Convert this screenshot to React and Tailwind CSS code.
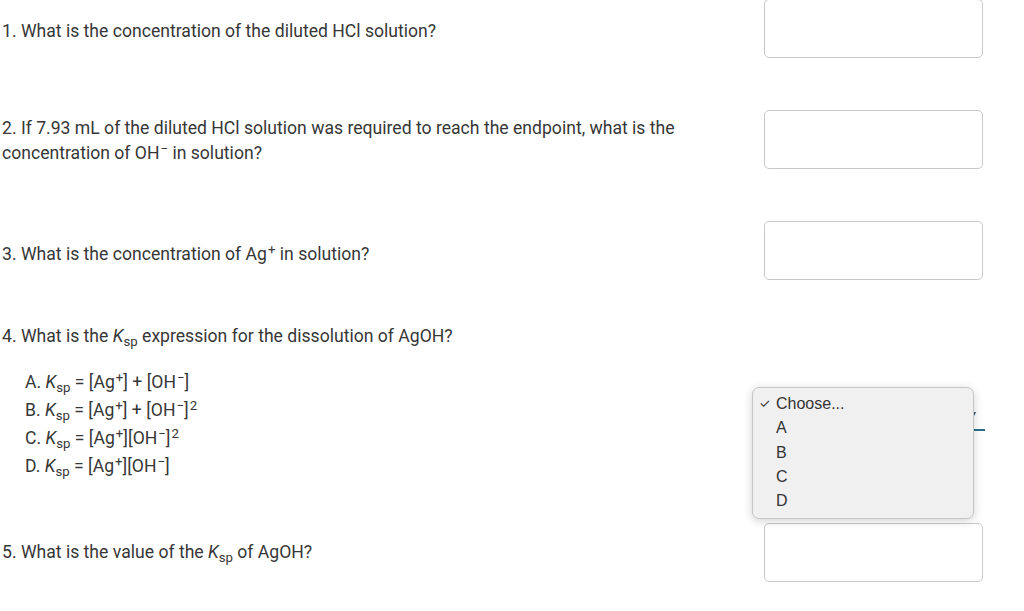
import React from 'react';

const Ksp = () => (
  <span>
    <i>K</i>
    <sub className="bottom-[-0.3em]">sp</sub>
  </span>
);

const Sup = ({ children }) => <sup className="top-[-0.45em] pl-[1px]">{children}</sup>;

const AnswerBox = () => (
  <div className="w-[219px] h-[59px] rounded-[5px] border border-[#c9c9c9] bg-white" />
);

export default function App() {
  return (
    <div className="w-[1024px] h-[611px] overflow-hidden bg-white font-['Roboto','Liberation_Sans',sans-serif] text-[17.6px] leading-[25px] text-[#373737]">
      <div className="w-[983px] pl-[2px] flex flex-col">
        {/* ── Q1 ── */}
        <div className="-mt-px flex items-center justify-between">
          <p className="w-[720px] pt-[5px]">1. What is the concentration of the diluted HCl solution?</p>
          <AnswerBox />
        </div>

        {/* ── Q2 ── */}
        <div className="mt-[52px] flex items-center justify-between">
          <p className="w-[720px] pt-[3px]">
            2. If 7.93 mL of the diluted HCl solution was required to reach the endpoint, what is the
            concentration of OH<Sup>−</Sup> in solution?
          </p>
          <AnswerBox />
        </div>

        {/* ── Q3 ── */}
        <div className="mt-[52px] flex items-center justify-between">
          <p className="w-[720px] pt-[7px]">
            3. What is the concentration of Ag<Sup>+</Sup> in solution?
          </p>
          <AnswerBox />
        </div>

        {/* ── Q4 ── */}
        <div className="mt-[44px] flex items-start justify-between">
          <div className="w-[720px]">
            <p>
              4. What is the <Ksp /> expression for the dissolution of AgOH?
            </p>
            <ul className="mt-[19px] pl-[23px] leading-[28px]">
              <li>A. <Ksp /> = [Ag<Sup>+</Sup>] + [OH<Sup>−</Sup>]</li>
              <li>B. <Ksp /> = [Ag<Sup>+</Sup>] + [OH<Sup>−</Sup>]<Sup>2</Sup></li>
              <li>C. <Ksp /> = [Ag<Sup>+</Sup>][OH<Sup>−</Sup>]<Sup>2</Sup></li>
              <li>D. <Ksp /> = [Ag<Sup>+</Sup>][OH<Sup>−</Sup>]</li>
            </ul>
          </div>
          <div className="relative w-[219px] mt-[74px]">
            <div className="relative w-[221px] h-[33px] bg-white border-b-2 border-[#2a6f8a]">
              <span className="absolute right-[9px] top-[12px] text-[8px] leading-none text-[#555]">▾</span>
            </div>
            {/* ── Open dropdown ── */}
            <div className="absolute left-[-12px] top-[-11px] w-[222px] h-[132px] rounded-[7px] border border-[#c6c6c6] bg-[#f0f0f0] shadow-[0_2px_10px_rgba(0,0,0,0.18)] pt-[4px] font-['Liberation_Sans','Inter',sans-serif] text-[16px] leading-[24.3px] text-[#333]">
              <div className="flex items-center">
                <span className="w-[23px] pl-[6px] text-[13px]">✓</span>
                <span>Choose...</span>
              </div>
              <div className="pl-[23px]">A</div>
              <div className="pl-[23px]">B</div>
              <div className="pl-[23px]">C</div>
              <div className="pl-[23px]">D</div>
            </div>
          </div>
        </div>

        {/* ── Q5 ── */}
        <div className="mt-[43px] flex items-center justify-between">
          <p className="w-[720px]">
            5. What is the value of the <Ksp /> of AgOH?
          </p>
          <AnswerBox />
        </div>
      </div>
    </div>
  );
}
